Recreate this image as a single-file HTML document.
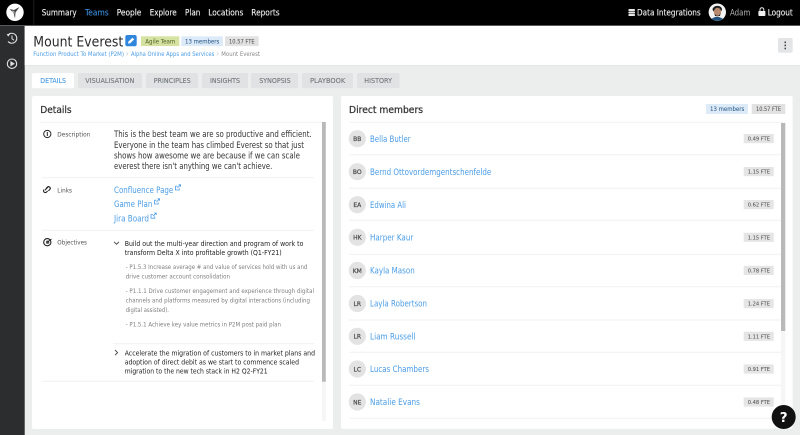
<!DOCTYPE html>
<html><head><meta charset="utf-8"><title>Mount Everest</title>
<style>
html,body{margin:0;padding:0;width:800px;height:435px;overflow:hidden;background:#eceeee}
svg{display:block;filter:blur(.25px)}
text{font-family:"DejaVu Sans","Liberation Sans",sans-serif;white-space:pre}
.nav{font-size:8.6px;fill:#f2f2f2;stroke:#f2f2f2;stroke-width:.12}
.tab{font-size:6.6px;fill:#74787c;stroke:#74787c;stroke-width:.12}
.bd{font-size:6.1px;stroke-width:.06}
.lb{font-size:6.3px;fill:#555}
.tx{font-size:8.5px;fill:#333}
.lk{font-size:8.5px;fill:#4a9ce6}
.ob{font-size:7.3px;fill:#222}
.sb{font-size:6.3px;fill:#808080}
.av{font-size:6px;fill:#4a4a4a;stroke:#4a4a4a;stroke-width:.2;text-anchor:middle}
.ft{font-size:5.6px;fill:#555;stroke:#555;stroke-width:.06}
.hd{font-size:10px;fill:#333;stroke:#333;stroke-width:.25}
.ln{stroke:#f0f1f1;stroke-width:1;fill:none}
</style></head><body>
<svg width="800" height="435" viewBox="0 0 800 435" xmlns="http://www.w3.org/2000/svg">
<rect width="800" height="435" fill="#eceeee"/>
<!-- nav -->
<rect width="800" height="25" fill="#000"/>
<rect y="25" width="800" height="1" fill="#5a5a5a"/>
<rect x="33.5" width=".7" height="25" fill="#2b2b2b"/>
<circle cx="15" cy="12.3" r="8.7" fill="#fff"/>
<path d="M9.5 9 L14 10 L19.5 7 L15.5 12.5 L15 18.5 L13.5 13 Z" fill="#444"/>
<path d="M11.5 10.5 L14.5 11 L14.5 15 Z" fill="#aaa"/>
<text class="nav" x="41.7" y="15.6" textLength="35" lengthAdjust="spacingAndGlyphs">Summary</text>
<text class="nav" x="85" y="15.6" textLength="23.7" lengthAdjust="spacingAndGlyphs" style="fill:#3a8bd8;stroke:#3a8bd8">Teams</text>
<text class="nav" x="116.7" y="15.6" textLength="24.7" lengthAdjust="spacingAndGlyphs">People</text>
<text class="nav" x="149.7" y="15.6" textLength="27" lengthAdjust="spacingAndGlyphs">Explore</text>
<text class="nav" x="185" y="15.6" textLength="15.3" lengthAdjust="spacingAndGlyphs">Plan</text>
<text class="nav" x="208.3" y="15.6" textLength="35" lengthAdjust="spacingAndGlyphs">Locations</text>
<text class="nav" x="251.3" y="15.6" textLength="28.3" lengthAdjust="spacingAndGlyphs">Reports</text>
<g fill="#e8e8e8"><rect x="628.4" y="9" width="6.6" height="2" rx=".8"/><rect x="628.4" y="11.5" width="6.6" height="2" rx=".8"/><rect x="628.4" y="14" width="6.6" height="2" rx=".8"/></g>
<text class="nav" x="637" y="15.5" textLength="63.7" lengthAdjust="spacingAndGlyphs">Data Integrations</text>
<circle cx="717.3" cy="12.2" r="8.7" fill="#f4f4f4"/>
<path d="M712.5 9.5 C713 5 721 4.5 722 9 L721.5 11 L713.5 11.5 Z" fill="#1c1c1c"/>
<ellipse cx="717.5" cy="12" rx="3.6" ry="4.4" fill="#b78a6e"/>
<path d="M714.5 13.5 Q717.5 18 720.5 13.5 L720 16 L715 16Z" fill="#222"/>
<path d="M711.5 19 Q717 14.5 723 19 Q717.5 22.5 711.5 19Z" fill="#20507c"/>
<text class="nav" x="730" y="15.5" textLength="20.3" lengthAdjust="spacingAndGlyphs" style="fill:#b5b5b5;stroke:none">Adam</text>
<path d="M760 11 V9.6 a1.9 1.9 0 0 1 3.8 0 V11" fill="none" stroke="#eee" stroke-width="1"/>
<rect x="758.4" y="11" width="7" height="5" rx=".7" fill="#eee"/>
<text class="nav" x="767.7" y="15.5" textLength="25" lengthAdjust="spacingAndGlyphs">Logout</text>
<!-- sidebar -->
<rect y="26" width="24.7" height="409" fill="#2b2d2f"/>
<path d="M8 35 A5 5 0 1 1 8 41.5" fill="none" stroke="#e2e2e2" stroke-width="1.1"/>
<path d="M6.6 34 L8.2 36.6 L10 34.4 Z" fill="#e2e2e2"/>
<path d="M12 35.5 V38.8 L14 40.2" fill="none" stroke="#e2e2e2" stroke-width="1"/>
<circle cx="12" cy="63.7" r="4.7" fill="none" stroke="#e2e2e2" stroke-width="1.1"/>
<path d="M10.4 61 L14.8 63.7 L10.4 66.4 Z" fill="#e2e2e2"/>
<!-- header -->
<rect x="24.7" y="26" width="775.3" height="39" fill="#fff"/>
<rect x="24.7" y="65" width="775.3" height=".8" fill="#e1e3e3"/>
<text x="33.3" y="46.7" font-size="14.6" fill="#2b2b2b" textLength="90" lengthAdjust="spacingAndGlyphs">Mount Everest</text>
<rect x="125.3" y="35" width="11.4" height="11.3" rx="2" fill="#2f86dc"/>
<path d="M128 43.6 L128.5 41.5 L132.4 37.7 L134.2 39.4 L130.2 43.2 Z" fill="#fff"/>
<rect x="141" y="36.3" width="38.3" height="9.8" fill="#d5e2a2"/>
<text class="bd" x="145.3" y="43.4" textLength="30" lengthAdjust="spacingAndGlyphs" style="fill:#5c6a2e;stroke:#5c6a2e">Agile Team</text>
<rect x="181.3" y="36.3" width="41.7" height="9.8" fill="#dcebf7"/>
<text class="bd" x="185" y="43.4" textLength="34.3" lengthAdjust="spacingAndGlyphs" style="fill:#2f5c8c;stroke:#2f5c8c">13 members</text>
<rect x="225" y="36.3" width="33.7" height="9.8" fill="#e2e2e2"/>
<text class="bd" x="229" y="43.4" textLength="25.7" lengthAdjust="spacingAndGlyphs" style="fill:#555;stroke:#555">10.57 FTE</text>
<text x="33.3" y="55.8" font-size="5.8" fill="#4a9ce6" textLength="90.7" lengthAdjust="spacingAndGlyphs">Function Product To Market (P2M)</text>
<path d="M126.3 52.2 L128 53.8 L126.3 55.4" fill="none" stroke="#aaa" stroke-width=".5"/>
<text x="131" y="55.8" font-size="5.8" fill="#4a9ce6" textLength="83.3" lengthAdjust="spacingAndGlyphs">Alpha Online Apps and Services</text>
<path d="M216.8 52.2 L218.5 53.8 L216.8 55.4" fill="none" stroke="#aaa" stroke-width=".5"/>
<text x="221.3" y="55.8" font-size="5.8" fill="#8a8a8a" textLength="38.7" lengthAdjust="spacingAndGlyphs">Mount Everest</text>
<rect x="778" y="38" width="14.7" height="14.7" rx="2" fill="#e3e5e7"/>
<g fill="#444"><rect x="784.5" y="41.5" width="1.5" height="1.6"/><rect x="784.5" y="44.6" width="1.5" height="1.6"/><rect x="784.5" y="47.7" width="1.5" height="1.6"/></g>
<!-- tabs -->
<rect x="32" y="73" width="42" height="15.3" rx="2" fill="#fff"/>
<rect x="78" y="73" width="64" height="15.3" rx="2" fill="#e0e2e3"/>
<rect x="146" y="73" width="52" height="15.3" rx="2" fill="#e0e2e3"/>
<rect x="202" y="73" width="46" height="15.3" rx="2" fill="#e0e2e3"/>
<rect x="251" y="73" width="47" height="15.3" rx="2" fill="#e0e2e3"/>
<rect x="302" y="73" width="51" height="15.3" rx="2" fill="#e0e2e3"/>
<rect x="357" y="73" width="42.5" height="15.3" rx="2" fill="#e0e2e3"/>
<text class="tab" x="40.3" y="83.1" textLength="25.7" lengthAdjust="spacingAndGlyphs" style="fill:#4a9ce6;stroke:#4a9ce6">DETAILS</text>
<text class="tab" x="85.3" y="83.1" textLength="49" lengthAdjust="spacingAndGlyphs">VISUALISATION</text>
<text class="tab" x="153.7" y="83.1" textLength="37" lengthAdjust="spacingAndGlyphs">PRINCIPLES</text>
<text class="tab" x="210" y="83.1" textLength="30" lengthAdjust="spacingAndGlyphs">INSIGHTS</text>
<text class="tab" x="259.3" y="83.1" textLength="31.3" lengthAdjust="spacingAndGlyphs">SYNOPSIS</text>
<text class="tab" x="310" y="83.1" textLength="35.3" lengthAdjust="spacingAndGlyphs">PLAYBOOK</text>
<text class="tab" x="364.3" y="83.1" textLength="27.7" lengthAdjust="spacingAndGlyphs">HISTORY</text>
<!-- left card -->
<rect x="32" y="96" width="301" height="333" rx="2" fill="#fff"/>
<text class="hd" x="40.3" y="113.2" textLength="31.3" lengthAdjust="spacingAndGlyphs">Details</text>
<path class="ln" d="M40 122.3H322"/>
<rect x="322" y="122" width="3.8" height="299" fill="#f6f6f6"/>
<rect x="322" y="122" width="3.8" height="259.7" fill="#b9b9b9"/>
<circle cx="47.3" cy="134" r="3.6" fill="none" stroke="#222" stroke-width="1"/>
<rect x="46.8" y="132" width="1" height="4" fill="#222"/>
<text class="lb" x="57.3" y="136.3" textLength="33" lengthAdjust="spacingAndGlyphs">Description</text>
<text class="tx" x="114" y="137" textLength="197.7" lengthAdjust="spacingAndGlyphs">This is the best team we are so productive and efficient.</text>
<text class="tx" x="114" y="148" textLength="190" lengthAdjust="spacingAndGlyphs">Everyone in the team has climbed Everest so that just</text>
<text class="tx" x="114" y="158.6" textLength="186" lengthAdjust="spacingAndGlyphs">shows how awesome we are because if we can scale</text>
<text class="tx" x="114" y="169" textLength="158.3" lengthAdjust="spacingAndGlyphs">everest there isn't anything we can't achieve.</text>
<path class="ln" d="M42 177.7H314"/>
<path d="M45.5 191 L48.8 187.6 M44.6 190.4 a1.7 1.7 0 0 0 2.6 2.4 l1 -1 M46.6 189.4 l1.4 -1.5 a1.7 1.7 0 0 1 2.4 2.4 l-1.4 1.4" fill="none" stroke="#222" stroke-width="1.1" transform="translate(-.6 -.8)"/>
<text class="lb" x="57.3" y="192.3" textLength="14.7" lengthAdjust="spacingAndGlyphs">Links</text>
<text class="lk" x="114" y="193" textLength="59.3" lengthAdjust="spacingAndGlyphs">Confluence Page</text>
<text class="lk" x="114" y="207" textLength="38.3" lengthAdjust="spacingAndGlyphs">Game Plan</text>
<text class="lk" x="114" y="221.3" textLength="35" lengthAdjust="spacingAndGlyphs">Jira Board</text>
<g fill="none" stroke="#4a9ce6" stroke-width=".8">
<path d="M175.4 186.2h2M175.4 186.2v3.8h3.8v-1.8M177.4 188 l3 -3M178.6 184.8h2v2"/>
<path d="M154.4 200.2h2M154.4 200.2v3.8h3.8v-1.8M156.4 202 l3 -3M157.6 198.8h2v2"/>
<path d="M151 214.4h2M151 214.4v3.8h3.8v-1.8M153 216.2 l3 -3M154.2 213h2v2"/>
</g>
<path class="ln" d="M42 230.3H314"/>
<circle cx="47.3" cy="242.2" r="3.6" fill="none" stroke="#222" stroke-width="1.1"/>
<circle cx="47.6" cy="242.2" r="1.7" fill="#555"/>
<path d="M47.5 242 L51.5 239" stroke="#222" stroke-width=".8"/>
<text class="lb" x="57.3" y="244.6" textLength="29.7" lengthAdjust="spacingAndGlyphs">Objectives</text>
<path d="M114 241.8 L116.5 244.2 L119 241.8" fill="none" stroke="#444" stroke-width=".9"/>
<text class="ob" x="124.7" y="246" textLength="178.7" lengthAdjust="spacingAndGlyphs">Build out the multi-year direction and program of work to</text>
<text class="ob" x="124.7" y="255" textLength="157" lengthAdjust="spacingAndGlyphs">transform Delta X into profitable growth (Q1-FY21)</text>
<text class="sb" x="125.7" y="269" textLength="181.7" lengthAdjust="spacingAndGlyphs">- P1.5.3 Increase average # and value of services hold with us and</text>
<text class="sb" x="125.7" y="278.6" textLength="104.3" lengthAdjust="spacingAndGlyphs">drive customer account consolidation</text>
<text class="sb" x="125.7" y="293" textLength="188.3" lengthAdjust="spacingAndGlyphs">- P1.1.1 Drive customer engagement and experience through digital</text>
<text class="sb" x="125.7" y="302.4" textLength="184.3" lengthAdjust="spacingAndGlyphs">channels and platforms measured by digital interactions (including</text>
<text class="sb" x="125.7" y="312" textLength="43.3" lengthAdjust="spacingAndGlyphs">digital assisted).</text>
<text class="sb" x="125.7" y="326.3" textLength="155.3" lengthAdjust="spacingAndGlyphs">- P1.5.1 Achieve key value metrics in P2M post paid plan</text>
<path class="ln" d="M113 343.7H314"/>
<path d="M115 350 L117.6 352.6 L115 355.2" fill="none" stroke="#444" stroke-width=".9"/>
<text class="ob" x="124.7" y="355.4" textLength="190.3" lengthAdjust="spacingAndGlyphs">Accelerate the migration of customers to in market plans and</text>
<text class="ob" x="124.7" y="364.4" textLength="174.3" lengthAdjust="spacingAndGlyphs">adoption of direct debit as we start to commence scaled</text>
<text class="ob" x="124.7" y="373.4" textLength="143" lengthAdjust="spacingAndGlyphs">migration to the new tech stack in H2 Q2-FY21</text>
<path class="ln" d="M42 381.3H314"/>
<!-- right card -->
<rect x="341" y="96" width="451.6" height="332.7" rx="2" fill="#fff"/>
<text class="hd" x="349" y="113.2" textLength="74" lengthAdjust="spacingAndGlyphs">Direct members</text>
<rect x="706" y="104" width="42" height="10" fill="#dcebf7"/>
<text class="bd" x="710" y="111.2" textLength="34.3" lengthAdjust="spacingAndGlyphs" style="fill:#2f5c8c;stroke:#2f5c8c">13 members</text>
<rect x="751.7" y="104" width="33.6" height="10" fill="#e2e2e2"/>
<text class="bd" x="756" y="111.2" textLength="25" lengthAdjust="spacingAndGlyphs" style="fill:#555;stroke:#555">10.57 FTE</text>
<rect x="781" y="122" width="4.3" height="306" fill="#f6f6f6"/>
<rect x="781" y="123" width="4.3" height="208" fill="#b9b9b9"/>
<path class="ln" d="M349 122.3H781M349 154.7H781M349 188.3H781M349 220.3H781M349 254.3H781M349 286.7H781M349 320H781M349 352.3H781M349 385.3H781M349 418.3H781"/>
<g fill="#e3e3e3">
<circle cx="357.3" cy="138.7" r="8.6"/><circle cx="357.3" cy="171.7" r="8.6"/><circle cx="357.3" cy="204.7" r="8.6"/><circle cx="357.3" cy="237.3" r="8.6"/><circle cx="357.3" cy="270.5" r="8.6"/><circle cx="357.3" cy="303.5" r="8.6"/><circle cx="357.3" cy="336.3" r="8.6"/><circle cx="357.3" cy="369" r="8.6"/><circle cx="357.3" cy="402" r="8.6"/>
</g>
<text class="av" x="357.3" y="141">BB</text>
<text class="av" x="357.3" y="174">BO</text>
<text class="av" x="357.3" y="207">EA</text>
<text class="av" x="357.3" y="239.6">HK</text>
<text class="av" x="357.3" y="272.8">KM</text>
<text class="av" x="357.3" y="305.8">LR</text>
<text class="av" x="357.3" y="338.6">LR</text>
<text class="av" x="357.3" y="371.3">LC</text>
<text class="av" x="357.3" y="404.3">NE</text>
<text class="lk" x="370" y="141.8" textLength="40.7" lengthAdjust="spacingAndGlyphs">Bella Butler</text>
<text class="lk" x="370" y="174.8" textLength="121.3" lengthAdjust="spacingAndGlyphs">Bernd Ottovordemgentschenfelde</text>
<text class="lk" x="370" y="207.8" textLength="36" lengthAdjust="spacingAndGlyphs">Edwina Ali</text>
<text class="lk" x="370" y="240.4" textLength="43.3" lengthAdjust="spacingAndGlyphs">Harper Kaur</text>
<text class="lk" x="370" y="273.6" textLength="44.7" lengthAdjust="spacingAndGlyphs">Kayla Mason</text>
<text class="lk" x="370" y="306.6" textLength="57" lengthAdjust="spacingAndGlyphs">Layla Robertson</text>
<text class="lk" x="370" y="339.4" textLength="45.5" lengthAdjust="spacingAndGlyphs">Liam Russell</text>
<text class="lk" x="370" y="372.1" textLength="59" lengthAdjust="spacingAndGlyphs">Lucas Chambers</text>
<text class="lk" x="370" y="405.1" textLength="50" lengthAdjust="spacingAndGlyphs">Natalie Evans</text>
<g fill="#e5e5e5">
<rect x="743.7" y="134" width="30" height="9.2"/><rect x="743.7" y="167" width="30" height="9.2"/><rect x="743.7" y="200" width="30" height="9.2"/><rect x="743.7" y="232.7" width="30" height="9.2"/><rect x="743.7" y="265.8" width="30" height="9.2"/><rect x="743.7" y="299" width="30" height="9.2"/><rect x="743.7" y="331.7" width="30" height="9.2"/><rect x="743.7" y="364.4" width="30" height="9.2"/><rect x="743.7" y="397.4" width="30" height="9.2"/>
</g>
<text class="ft" x="747.7" y="140.7" textLength="22.3" lengthAdjust="spacingAndGlyphs">0.49 FTE</text>
<text class="ft" x="747.7" y="173.7" textLength="22.3" lengthAdjust="spacingAndGlyphs">1.15 FTE</text>
<text class="ft" x="747.7" y="206.7" textLength="22.3" lengthAdjust="spacingAndGlyphs">0.62 FTE</text>
<text class="ft" x="747.7" y="239.4" textLength="22.3" lengthAdjust="spacingAndGlyphs">1.15 FTE</text>
<text class="ft" x="747.7" y="272.5" textLength="22.3" lengthAdjust="spacingAndGlyphs">0.78 FTE</text>
<text class="ft" x="747.7" y="305.7" textLength="22.3" lengthAdjust="spacingAndGlyphs">1.24 FTE</text>
<text class="ft" x="747.7" y="338.4" textLength="22.3" lengthAdjust="spacingAndGlyphs">1.11 FTE</text>
<text class="ft" x="747.7" y="371.1" textLength="22.3" lengthAdjust="spacingAndGlyphs">0.91 FTE</text>
<text class="ft" x="747.7" y="404.1" textLength="22.3" lengthAdjust="spacingAndGlyphs">0.48 FTE</text>
<!-- help -->
<circle cx="783.7" cy="417" r="12" fill="#111"/>
<text x="783.7" y="422" font-size="13.5" font-weight="bold" fill="#fff" text-anchor="middle">?</text>
</svg>
</body></html>
